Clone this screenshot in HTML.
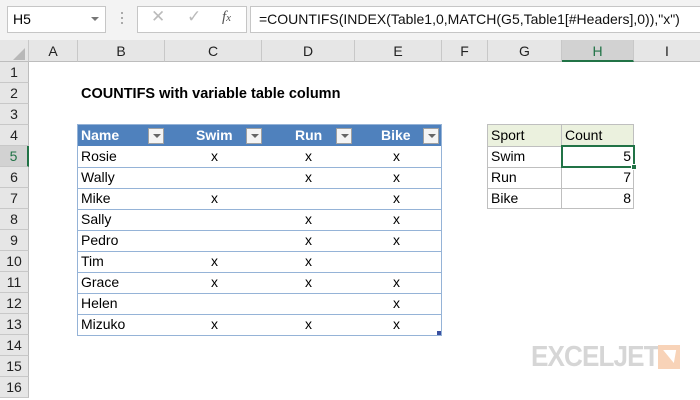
<!DOCTYPE html>
<html><head><style>
*{box-sizing:border-box;margin:0;padding:0}
body{width:700px;height:400px;overflow:hidden;background:#fff;font-family:"Liberation Sans",Arial,sans-serif;position:relative}
.a{position:absolute}
.t{font-size:14px;color:#000;line-height:21px;white-space:nowrap}
.ch{position:absolute;top:40px;height:22px;background:#e6e6e6;border-right:1px solid #c8c8c8;border-bottom:1px solid #bdbdbd;text-align:center;font-size:14px;line-height:22px;color:#222}
.rh{position:absolute;left:0;width:29px;height:21px;background:#e6e6e6;border-bottom:1px solid #c8c8c8;border-right:1px solid #bdbdbd;text-align:center;font-size:14px;line-height:21px;color:#222}
.dd{position:absolute;width:16px;height:16px;background:#f4f4f4;border:1px solid #a0a0a0}
.dd:after{content:"";position:absolute;left:4px;top:5px;border-left:4px solid transparent;border-right:4px solid transparent;border-top:4px solid #666}
.th{color:#fff;font-weight:bold;font-size:14px;line-height:21px}
.bl{position:absolute;height:1px;background:#95b3d7}
</style></head><body>
<div class="a" style="left:0;top:0;width:700px;height:40px;background:#f3f3f3"></div>
<div class="a" style="left:7px;top:6px;width:99px;height:27px;background:#fff;border:1px solid #c6c6c6"></div>
<div class="a t" style="left:13px;top:9px">H5</div>
<div class="a" style="left:91px;top:17px;border-left:4px solid transparent;border-right:4px solid transparent;border-top:4px solid #777"></div>
<div class="a" style="left:121px;top:12px;width:2px;height:2px;background:#aaa;box-shadow:0 5px #aaa,0 10px #aaa"></div>
<div class="a" style="left:137px;top:6px;width:110px;height:27px;background:#fff;border:1px solid #c6c6c6"></div>
<div class="a" style="left:151px;top:7px;font-size:17px;color:#bbb">✕</div>
<div class="a" style="left:187px;top:7px;font-size:17px;color:#bbb">✓</div>
<div class="a" style="left:222px;top:9px;font-family:'Liberation Serif',serif;font-style:italic;font-size:15px;color:#555">f<span style="font-size:11px">x</span></div>
<div class="a" style="left:250px;top:6px;width:450px;height:27px;background:#fff;border:1px solid #c6c6c6;border-right:none"></div>
<div class="a t" style="left:259px;top:9px;color:#111">=COUNTIFS(INDEX(Table1,0,MATCH(G5,Table1[#Headers],0)),"x")</div>
<div class="ch" style="left:0;width:29px"></div>
<div class="a" style="left:13px;top:48px;border-left:12px solid transparent;border-bottom:12px solid #b8b8b8"></div>
<div class="ch" style="left:29px;width:49px">A</div>
<div class="ch" style="left:78px;width:87px">B</div>
<div class="ch" style="left:165px;width:97px">C</div>
<div class="ch" style="left:262px;width:93px">D</div>
<div class="ch" style="left:355px;width:87px">E</div>
<div class="ch" style="left:442px;width:46px">F</div>
<div class="ch" style="left:488px;width:74px">G</div>
<div class="ch" style="left:562px;width:72px;background:#d2d2d2;border-bottom:2px solid #217346;color:#217346">H</div>
<div class="ch" style="left:634px;width:66px;border-right:none">I</div>
<div class="rh" style="top:62px">1</div><div class="rh" style="top:83px">2</div><div class="rh" style="top:104px">3</div><div class="rh" style="top:125px">4</div><div class="rh" style="top:146px;background:#d2d2d2;color:#217346;border-right:2px solid #217346">5</div><div class="rh" style="top:167px">6</div><div class="rh" style="top:188px">7</div><div class="rh" style="top:209px">8</div><div class="rh" style="top:230px">9</div><div class="rh" style="top:251px">10</div><div class="rh" style="top:272px">11</div><div class="rh" style="top:293px">12</div><div class="rh" style="top:314px">13</div><div class="rh" style="top:335px">14</div><div class="rh" style="top:356px">15</div><div class="rh" style="top:377px">16</div>
<div class="a t" style="left:81px;top:84px;font-weight:bold;font-size:14.5px">COUNTIFS with variable table column</div>
<div class="a" style="left:77px;top:124px;width:365px;height:212px;background:#fff;border:1px solid #95b3d7"></div>
<div class="a" style="left:78px;top:125px;width:363px;height:21px;background:#4f81bd"></div>
<div class="bl" style="left:78px;top:167px;width:363px"></div><div class="bl" style="left:78px;top:188px;width:363px"></div><div class="bl" style="left:78px;top:209px;width:363px"></div><div class="bl" style="left:78px;top:230px;width:363px"></div><div class="bl" style="left:78px;top:251px;width:363px"></div><div class="bl" style="left:78px;top:272px;width:363px"></div><div class="bl" style="left:78px;top:293px;width:363px"></div><div class="bl" style="left:78px;top:314px;width:363px"></div>
<div class="a th" style="left:81px;top:125px">Name</div>
<div class="a th" style="left:196px;top:125px">Swim</div>
<div class="a th" style="left:295px;top:125px">Run</div>
<div class="a th" style="left:381px;top:125px">Bike</div>
<div class="dd" style="left:148px;top:128px"></div><div class="dd" style="left:246px;top:128px"></div><div class="dd" style="left:336px;top:128px"></div><div class="dd" style="left:423px;top:128px"></div>
<div class="a" style="left:437px;top:331px;width:4px;height:4px;background:#3a50a0"></div>
<div class="a t" style="left:81px;top:146px">Rosie</div>
<div class="a t" style="left:81px;top:167px">Wally</div>
<div class="a t" style="left:81px;top:188px">Mike</div>
<div class="a t" style="left:81px;top:209px">Sally</div>
<div class="a t" style="left:81px;top:230px">Pedro</div>
<div class="a t" style="left:81px;top:251px">Tim</div>
<div class="a t" style="left:81px;top:272px">Grace</div>
<div class="a t" style="left:81px;top:293px">Helen</div>
<div class="a t" style="left:81px;top:314px">Mizuko</div>
<div class="a t" style="left:211px;top:146px">x</div><div class="a t" style="left:305px;top:146px">x</div><div class="a t" style="left:393px;top:146px">x</div>
<div class="a t" style="left:305px;top:167px">x</div><div class="a t" style="left:393px;top:167px">x</div>
<div class="a t" style="left:211px;top:188px">x</div><div class="a t" style="left:393px;top:188px">x</div>
<div class="a t" style="left:305px;top:209px">x</div><div class="a t" style="left:393px;top:209px">x</div>
<div class="a t" style="left:305px;top:230px">x</div><div class="a t" style="left:393px;top:230px">x</div>
<div class="a t" style="left:211px;top:251px">x</div><div class="a t" style="left:305px;top:251px">x</div>
<div class="a t" style="left:211px;top:272px">x</div><div class="a t" style="left:305px;top:272px">x</div><div class="a t" style="left:393px;top:272px">x</div>
<div class="a t" style="left:393px;top:293px">x</div>
<div class="a t" style="left:211px;top:314px">x</div><div class="a t" style="left:305px;top:314px">x</div><div class="a t" style="left:393px;top:314px">x</div>
<div class="a" style="left:488px;top:125px;width:146px;height:21px;background:#ebf1de"></div>
<div class="a" style="left:487px;top:124px;width:147px;height:85px;border:1px solid #bfbfbf"></div>
<div class="a" style="left:561px;top:124px;width:1px;height:85px;background:#bfbfbf"></div>
<div class="a" style="left:488px;top:146px;width:146px;height:1px;background:#bfbfbf"></div>
<div class="a" style="left:488px;top:167px;width:146px;height:1px;background:#bfbfbf"></div>
<div class="a" style="left:488px;top:188px;width:146px;height:1px;background:#bfbfbf"></div>
<div class="a t" style="left:491px;top:125px">Sport</div><div class="a t" style="left:565px;top:125px">Count</div>
<div class="a t" style="left:491px;top:146px">Swim</div><div class="a t" style="left:491px;top:167px">Run</div><div class="a t" style="left:491px;top:188px">Bike</div>
<div class="a t" style="left:562px;top:146px;width:69px;text-align:right">5</div>
<div class="a t" style="left:562px;top:167px;width:69px;text-align:right">7</div>
<div class="a t" style="left:562px;top:188px;width:69px;text-align:right">8</div>
<div class="a" style="left:561px;top:145px;width:74px;height:23px;border:2px solid #217346"></div>
<div class="a" style="left:631px;top:164px;width:6px;height:6px;background:#217346;border:1px solid #fff"></div>
<div class="a" style="left:531px;top:341px;font-size:29px;font-weight:bold;color:#d6d6d6;letter-spacing:-1px;line-height:32px;transform:scaleX(0.9);transform-origin:left">EXCELJET</div>
<div class="a" style="left:658px;top:345px;width:22px;height:24px;background:#f8d3b8"></div>
<div class="a" style="left:662px;top:350px;border-left:13px solid transparent;border-top:13px solid #fff;width:0;height:0;transform:skewX(-10deg)"></div>
</body></html>
